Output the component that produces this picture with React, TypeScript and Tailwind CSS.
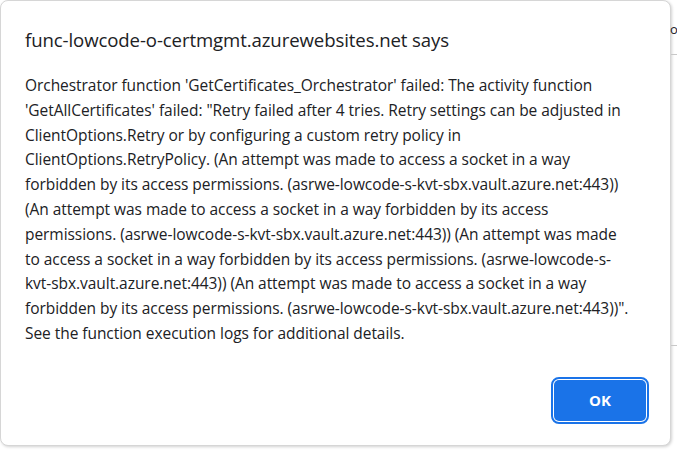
const lines = [
  "Orchestrator function 'GetCertificates_Orchestrator' failed: The activity function",
  "'GetAllCertificates' failed: \"Retry failed after 4 tries. Retry settings can be adjusted in",
  "ClientOptions.Retry or by configuring a custom retry policy in",
  "ClientOptions.RetryPolicy. (An attempt was made to access a socket in a way",
  "forbidden by its access permissions. (asrwe-lowcode-s-kvt-sbx.vault.azure.net:443))",
  "(An attempt was made to access a socket in a way forbidden by its access",
  "permissions. (asrwe-lowcode-s-kvt-sbx.vault.azure.net:443)) (An attempt was made",
  "to access a socket in a way forbidden by its access permissions. (asrwe-lowcode-s-",
  "kvt-sbx.vault.azure.net:443)) (An attempt was made to access a socket in a way",
  "forbidden by its access permissions. (asrwe-lowcode-s-kvt-sbx.vault.azure.net:443))\".",
  "See the function execution logs for additional details.",
];

export default function App() {
  return (
    <div
      className="flex h-[453px] w-[677px] overflow-hidden bg-white text-[#202124]"
      style={{ fontFamily: '"Open Sans", "Noto Sans", sans-serif' }}
    >
      <div className="flex h-[446px] w-[671px] shrink-0 flex-col rounded-lg border border-[#d6d6d6] bg-white shadow-[1px_1px_3px_rgba(0,0,0,0.18)]">
        <h1 className="whitespace-nowrap pl-6 pt-[27px] text-[18.6px] leading-6 tracking-[-0.1px]">
          func-lowcode-o-certmgmt.azurewebsites.net says
        </h1>
        <div className="mt-[21px] pl-6 text-[15.5px] leading-[24.8px] tracking-[-0.05px]">
          {lines.map((line, i) => (
            <div key={i} className="whitespace-nowrap">
              {line}
            </div>
          ))}
        </div>
        <div className="mt-auto flex justify-end pb-[21px] pr-[21px]">
          <button className="h-[47px] w-[98px] rounded-lg border-2 border-[#1a73e8] bg-white p-px">
            <span className="flex h-full w-full items-center justify-center rounded-[5px] bg-[#1a73e8] text-[15px] font-bold text-white">
              OK
            </span>
          </button>
        </div>
      </div>
      <div className="flex flex-1 flex-col pt-[20px]">
        <span className="-ml-px whitespace-nowrap text-[13px] text-[#202124]">oe</span>
        <div className="mt-[14px] h-px bg-[#c8c8c8]" />
        <div className="mt-[290px] h-px bg-[#c8c8c8]" />
      </div>
    </div>
  );
}
